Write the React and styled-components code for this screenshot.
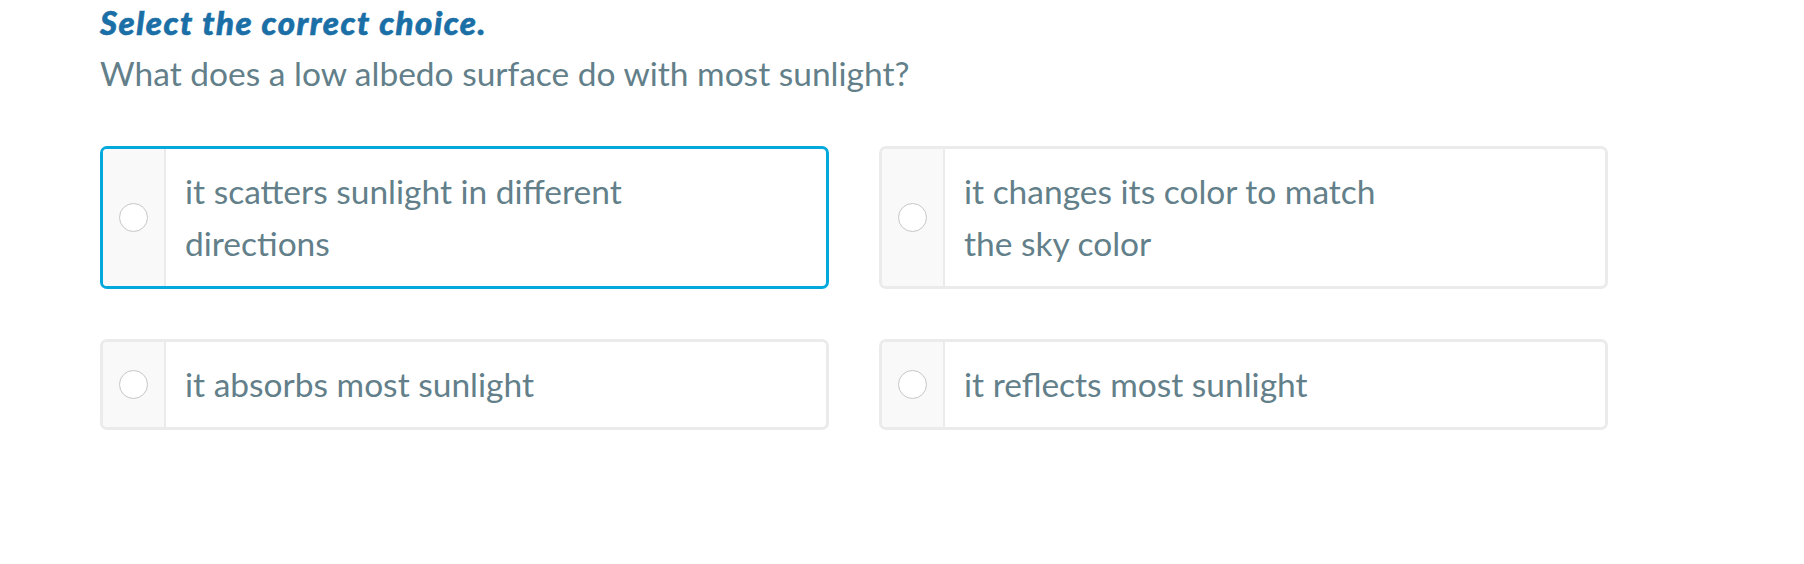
import styled, { createGlobalStyle } from 'styled-components';

const GlobalStyle = createGlobalStyle`
  html, body {
    margin: 0;
    padding: 0;
    background: #ffffff;
  }
  body {
    font-family: Lato, "Open Sans", sans-serif;
  }
`;

const Page = styled.div`
  padding: 2px 100px 0;
`;

const Prompt = styled.h2`
  margin: 0;
  font-size: 33px;
  line-height: 40px;
  font-weight: 900;
  font-style: italic;
  letter-spacing: 1.5px;
  -webkit-text-stroke: 0.6px #1a6fa6;
  color: #1a6fa6;
`;

const Question = styled.p`
  margin: 11px 0 0;
  font-size: 33.5px;
  line-height: 40px;
  color: #627f8a;
`;

const Choices = styled.div`
  display: grid;
  grid-template-columns: 729px 729px;
  column-gap: 50px;
  row-gap: 50px;
  margin-top: 53px;
`;

const Choice = styled.label`
  display: flex;
  box-sizing: border-box;
  border: 3px solid ${(p) => (p.$selected ? '#03a9dc' : '#ebebeb')};
  border-radius: 7px;
  overflow: hidden;
  background: #ffffff;
  cursor: pointer;
`;

const RadioCell = styled.div`
  flex: 0 0 61px;
  display: flex;
  align-items: center;
  justify-content: center;
  background: #f9f9f9;
  border-right: 2px solid #ebebeb;
`;

const Radio = styled.span`
  width: 27px;
  height: 27px;
  border-radius: 50%;
  border: 1px solid #c6c6c6;
  background: #ffffff;
`;

const TextCell = styled.div`
  flex: 1;
  padding: 16px 0 17px 19px;
`;

const Label = styled.span`
  display: block;
  max-width: 462px;
  font-size: 33.5px;
  line-height: 52px;
  color: #627f8a;
`;

const choices = [
  { text: 'it scatters sunlight in different directions', selected: true },
  { text: 'it changes its color to match the sky color' },
  { text: 'it absorbs most sunlight' },
  { text: 'it reflects most sunlight' },
];

export default function App() {
  return (
    <Page>
      <GlobalStyle />
      <Prompt>Select the correct choice.</Prompt>
      <Question>What does a low albedo surface do with most sunlight?</Question>
      <Choices>
        {choices.map((c) => (
          <Choice key={c.text} $selected={c.selected}>
            <RadioCell>
              <Radio />
            </RadioCell>
            <TextCell>
              <Label>{c.text}</Label>
            </TextCell>
          </Choice>
        ))}
      </Choices>
    </Page>
  );
}
